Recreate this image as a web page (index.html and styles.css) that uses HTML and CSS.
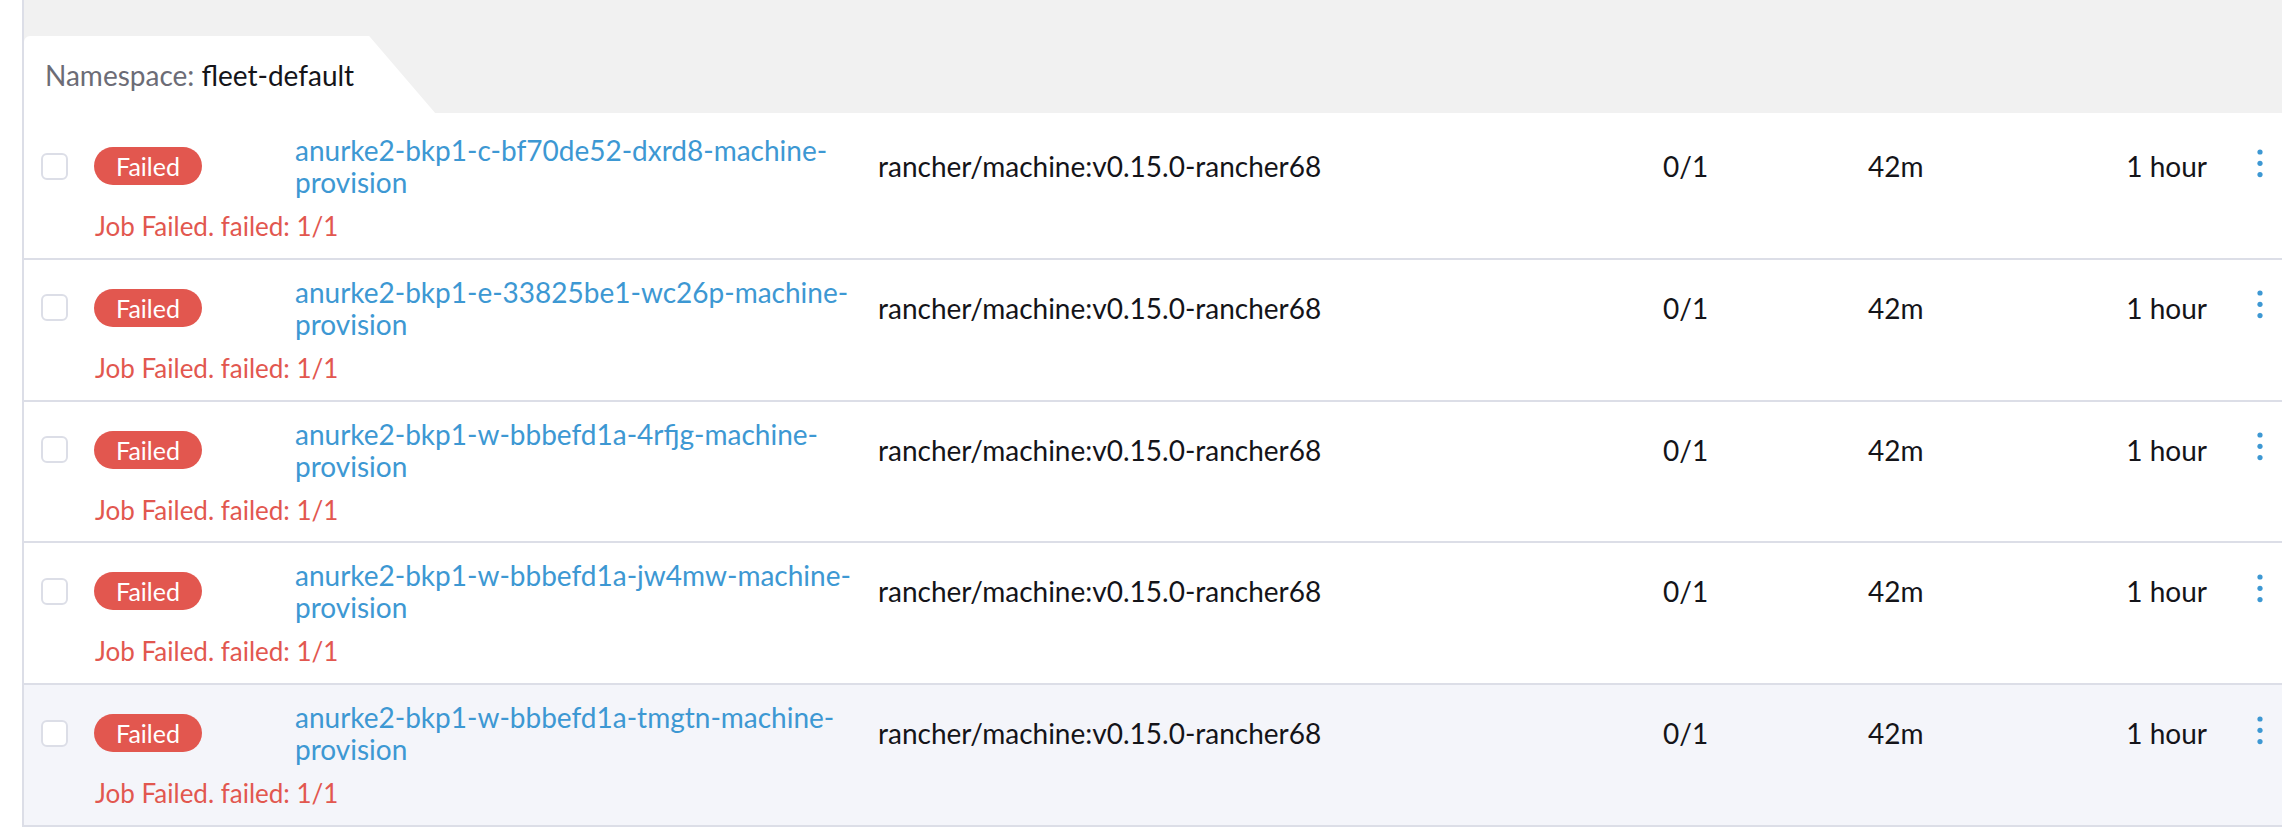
FILE: index.html
```html
<!DOCTYPE html>
<html lang="en">
<head>
<meta charset="UTF-8">
<meta name="viewport" content="width=device-width, initial-scale=1.0">
<title>Jobs - fleet-default</title>
<link rel="stylesheet" href="styles.css">
</head>
<body>
<div class="list">
    <!-- Group header -->
    <div class="group-row">
        <div class="group-tab"><span class="label">Namespace:</span> fleet-default</div>
    </div>

    <div class="row first">
        <div class="main">
            <span class="check"></span>
            <span class="badge">Failed</span>
            <a class="name" href="#">anurke2-bkp1-c-bf70de52-dxrd8-machine-provision</a>
            <span>rancher/machine:v0.15.0-rancher68</span>
            <span>0/1</span>
            <span>42m</span>
            <span class="age">1 hour</span>
            <span class="dots"><svg width="6" height="29" viewBox="0 0 6 29"><circle cx="3" cy="3" r="2.6"/><circle cx="3" cy="14.3" r="2.6"/><circle cx="3" cy="25.6" r="2.6"/></svg></span>
        </div>
        <div class="error">Job Failed. failed: 1/1</div>
    </div>

    <div class="row">
        <div class="main">
            <span class="check"></span>
            <span class="badge">Failed</span>
            <a class="name" href="#">anurke2-bkp1-e-33825be1-wc26p-machine-provision</a>
            <span>rancher/machine:v0.15.0-rancher68</span>
            <span>0/1</span>
            <span>42m</span>
            <span class="age">1 hour</span>
            <span class="dots"><svg width="6" height="29" viewBox="0 0 6 29"><circle cx="3" cy="3" r="2.6"/><circle cx="3" cy="14.3" r="2.6"/><circle cx="3" cy="25.6" r="2.6"/></svg></span>
        </div>
        <div class="error">Job Failed. failed: 1/1</div>
    </div>

    <div class="row">
        <div class="main">
            <span class="check"></span>
            <span class="badge">Failed</span>
            <a class="name" href="#">anurke2-bkp1-w-bbbefd1a-4rfjg-machine-provision</a>
            <span>rancher/machine:v0.15.0-rancher68</span>
            <span>0/1</span>
            <span>42m</span>
            <span class="age">1 hour</span>
            <span class="dots"><svg width="6" height="29" viewBox="0 0 6 29"><circle cx="3" cy="3" r="2.6"/><circle cx="3" cy="14.3" r="2.6"/><circle cx="3" cy="25.6" r="2.6"/></svg></span>
        </div>
        <div class="error">Job Failed. failed: 1/1</div>
    </div>

    <div class="row">
        <div class="main">
            <span class="check"></span>
            <span class="badge">Failed</span>
            <a class="name" href="#">anurke2-bkp1-w-bbbefd1a-jw4mw-machine-provision</a>
            <span>rancher/machine:v0.15.0-rancher68</span>
            <span>0/1</span>
            <span>42m</span>
            <span class="age">1 hour</span>
            <span class="dots"><svg width="6" height="29" viewBox="0 0 6 29"><circle cx="3" cy="3" r="2.6"/><circle cx="3" cy="14.3" r="2.6"/><circle cx="3" cy="25.6" r="2.6"/></svg></span>
        </div>
        <div class="error">Job Failed. failed: 1/1</div>
    </div>

    <!-- hovered row -->
    <div class="row hover">
        <div class="main">
            <span class="check"></span>
            <span class="badge">Failed</span>
            <a class="name" href="#">anurke2-bkp1-w-bbbefd1a-tmgtn-machine-provision</a>
            <span>rancher/machine:v0.15.0-rancher68</span>
            <span>0/1</span>
            <span>42m</span>
            <span class="age">1 hour</span>
            <span class="dots"><svg width="6" height="29" viewBox="0 0 6 29"><circle cx="3" cy="3" r="2.6"/><circle cx="3" cy="14.3" r="2.6"/><circle cx="3" cy="25.6" r="2.6"/></svg></span>
        </div>
        <div class="error">Job Failed. failed: 1/1</div>
    </div>
</div>
</body>
</html>
```
FILE: styles.css
```css
/* Job list styles */
body {
    margin: 0;
    font-family: Lato, "Noto Sans", sans-serif;
    color: #141419;
    background-color: #fff;
    overflow: hidden;
}

.list {
    margin-left: 22px;
    border-left: 2px solid #dcdee7;
}

/* Namespace group header */
.group-row {
    background-color: #f1f1f1;
    padding-top: 36px;
}

.group-tab {
    display: inline-block;
    box-sizing: border-box;
    height: 77px;
    padding: 23px 81px 0 21px;
    background-color: #fff;
    border-top-left-radius: 6px;
    clip-path: polygon(0 0, calc(100% - 66px) 0, 100% 100%, 0 100%);
    font-size: 28px;
    line-height: 32px;
}

.label {
    color: #6c6c76;
}

/* Rows */
.row {
    padding: 16px 0 17px 17px;
    border-bottom: 2px solid #dcdee7;
}

.row.first {
    padding-top: 21px;
}

.row.hover {
    background-color: #f4f5fa;
}

.main {
    display: grid;
    grid-template-columns: 53px 201px 583px 785px 205px 170px 1fr 75px;
    align-items: center;
    font-size: 28px;
    line-height: 32px;
}

.check {
    width: 27px;
    height: 27px;
    box-sizing: border-box;
    border: 2px solid #dcdee7;
    border-radius: 6px;
    background-color: #fff;
}

.badge {
    justify-self: start;
    display: flex;
    align-items: center;
    justify-content: center;
    width: 108px;
    height: 38px;
    border-radius: 19px;
    background-color: #e2574f;
    color: #fff;
    font-size: 25px;
}

.name {
    padding-right: 10px;
    color: #3d98d3;
    text-decoration: none;
}

.age {
    text-align: right;
}

.dots {
    display: flex;
    padding-left: 50px;
    margin-bottom: 6px;
    fill: #3d98d3;
}

.error {
    margin: 14px 0 0 54px;
    font-size: 26px;
    line-height: 28.8px;
    color: #e2574f;
}
```
